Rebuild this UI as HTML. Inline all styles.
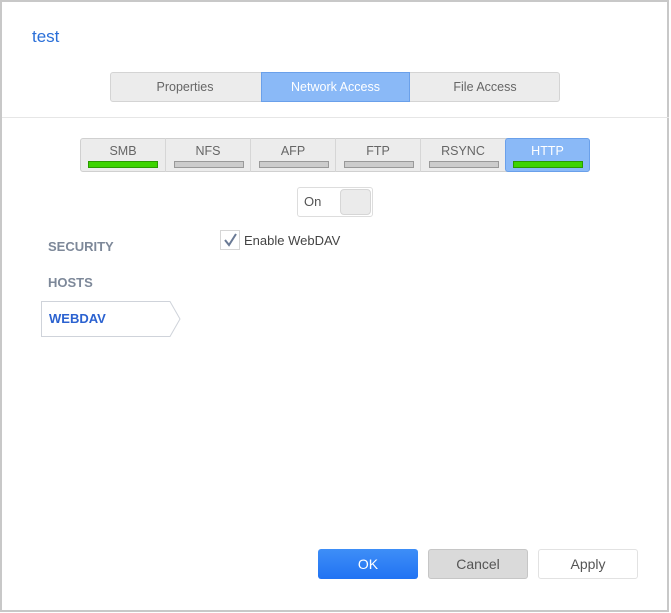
<!DOCTYPE html><html><head><style>
body{margin:0;width:671px;height:613px;background:#fff;font-family:"Liberation Sans",sans-serif;position:relative;overflow:hidden}
.a{position:absolute;box-sizing:border-box}
.t{display:flex;align-items:center;justify-content:center;font-size:12.5px;color:#666}
.s{box-sizing:border-box}
</style></head><body>
<div class="a" style="left:0;top:0;width:669px;height:612px;border:2px solid #c8c8c8"></div>
<div class="a" style="left:32px;top:27px;font-size:17px;color:#2a6fd8">test</div>
<div class="a" style="left:110px;top:72px;width:450px;height:30px;border:1px solid #d4d4d4;border-radius:3px;background:#ececec"></div>
<div class="a t" style="left:110px;top:72px;width:150px;height:30px">Properties</div>
<div class="a t" style="left:261px;top:72px;width:149px;height:30px;background:#8ab9f7;border:1px solid #6aa0ea;color:#fff">Network Access</div>
<div class="a t" style="left:410px;top:72px;width:150px;height:30px">File Access</div>
<div class="a" style="left:2px;top:117px;width:667px;height:1px;background:#e6e6e6"></div>
<div class="a" style="left:80px;top:138px;width:510px;height:34px;border:1px solid #d0d0d0;border-radius:3px;background:#ececec"></div>
<div class="a" style="left:81px;top:138px;display:flex;height:34px">
<div style="width:85px;border-right:1px solid #d6d6d6;position:relative" class="t s">
<span style="position:absolute;top:6px">SMB</span><div style="position:absolute;left:7px;top:23px;width:68px;height:5px;background:#3dd400;border:1px solid #2a9a00"></div></div>
<div style="width:85px;border-right:1px solid #d6d6d6;position:relative" class="t s"><span style="position:absolute;top:6px">NFS</span><div style="position:absolute;left:8px;top:23px;width:68px;height:5px;background:#ccc;border:1px solid #999"></div></div>
<div style="width:85px;border-right:1px solid #d6d6d6;position:relative" class="t s"><span style="position:absolute;top:6px">AFP</span><div style="position:absolute;left:8px;top:23px;width:68px;height:5px;background:#ccc;border:1px solid #999"></div></div>
<div style="width:85px;border-right:1px solid #d6d6d6;position:relative" class="t s"><span style="position:absolute;top:6px">FTP</span><div style="position:absolute;left:8px;top:23px;width:68px;height:5px;background:#ccc;border:1px solid #999"></div></div>
<div style="width:84px;position:relative" class="t s"><span style="position:absolute;top:6px">RSYNC</span><div style="position:absolute;left:8px;top:23px;width:68px;height:5px;background:#ccc;border:1px solid #999"></div></div>
<div style="width:85px;position:relative;background:#8ab9f7;border:1px solid #6aa0ea;border-radius:3px;color:#fff" class="t s"><span style="position:absolute;top:5px">HTTP</span><div style="position:absolute;left:7px;top:22px;width:68px;height:5px;background:#3dd400;border:1px solid #2a9a00"></div></div>
</div>
<div class="a" style="left:297px;top:187px;width:76px;height:30px;border:1px solid #ddd;border-radius:3px"></div>
<div class="a" style="left:304px;top:194px;font-size:13px;color:#555">On</div>
<div class="a" style="left:340px;top:189px;width:31px;height:26px;background:#ebebeb;border:1px solid #d6d6d6;border-radius:4px"></div>
<div class="a" style="left:220px;top:230px;width:20px;height:20px;border:1px solid #d6d6d6"></div>
<svg class="a" style="left:220px;top:230px" width="20" height="20"><path d="M5 10 L9 15 L16 4" fill="none" stroke="#6a7a95" stroke-width="2"/></svg>
<div class="a" style="left:244px;top:233px;font-size:13px;color:#444">Enable WebDAV</div>
<div class="a" style="left:48px;top:239px;font-size:13px;font-weight:bold;color:#7d8899">SECURITY</div>
<div class="a" style="left:48px;top:275px;font-size:13px;font-weight:bold;color:#7d8899">HOSTS</div>
<svg class="a" style="left:40px;top:300px" width="142" height="38"><path d="M1.5 1.5 H130 L140 19 L130 36.5 H1.5 Z" fill="#fff" stroke="#cfd3da"/></svg>
<div class="a" style="left:49px;top:311px;font-size:13px;font-weight:bold;color:#2b62d0">WEBDAV</div>
<div class="a t" style="left:318px;top:549px;width:100px;height:30px;background:linear-gradient(#3e8ef7,#2173f3);border-radius:3px;color:#fff;font-size:14px">OK</div>
<div class="a t" style="left:428px;top:549px;width:100px;height:30px;background:#dadada;border:1px solid #c6c6c6;border-radius:3px;font-size:14px;color:#555">Cancel</div>
<div class="a t" style="left:538px;top:549px;width:100px;height:30px;background:#fff;border:1px solid #e2e2e2;border-radius:3px;font-size:14px;color:#555">Apply</div>
</body></html>
